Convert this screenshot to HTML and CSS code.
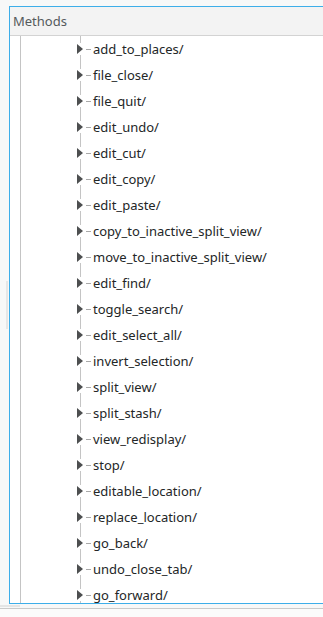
FILE: index.html
```html
<!DOCTYPE html>
<html lang="en">
<head>
  <meta charset="UTF-8" />
  <meta name="viewport" content="width=device-width, initial-scale=1.0" />
  <title>Methods</title>
  <link rel="stylesheet" href="styles.css">
</head>
<body>
  <div class="pane">
    <div class="grip"></div>
    <div class="view">
      <div class="head">Methods</div>
      <ul class="tree">
        <li><span class="arrow"></span><span class="dash"></span>add_to_places/</li>
        <li><span class="arrow"></span><span class="dash"></span>file_close/</li>
        <li><span class="arrow"></span><span class="dash"></span>file_quit/</li>
        <li><span class="arrow"></span><span class="dash"></span>edit_undo/</li>
        <li><span class="arrow"></span><span class="dash"></span>edit_cut/</li>
        <li><span class="arrow"></span><span class="dash"></span>edit_copy/</li>
        <li><span class="arrow"></span><span class="dash"></span>edit_paste/</li>
        <li><span class="arrow"></span><span class="dash"></span>copy_to_inactive_split_view/</li>
        <li><span class="arrow"></span><span class="dash"></span>move_to_inactive_split_view/</li>
        <li><span class="arrow"></span><span class="dash"></span>edit_find/</li>
        <li><span class="arrow"></span><span class="dash"></span>toggle_search/</li>
        <li><span class="arrow"></span><span class="dash"></span>edit_select_all/</li>
        <li><span class="arrow"></span><span class="dash"></span>invert_selection/</li>
        <li><span class="arrow"></span><span class="dash"></span>split_view/</li>
        <li><span class="arrow"></span><span class="dash"></span>split_stash/</li>
        <li><span class="arrow"></span><span class="dash"></span>view_redisplay/</li>
        <li><span class="arrow"></span><span class="dash"></span>stop/</li>
        <li><span class="arrow"></span><span class="dash"></span>editable_location/</li>
        <li><span class="arrow"></span><span class="dash"></span>replace_location/</li>
        <li><span class="arrow"></span><span class="dash"></span>go_back/</li>
        <li><span class="arrow"></span><span class="dash"></span>undo_close_tab/</li>
        <li><span class="arrow"></span><span class="dash"></span>go_forward/</li>
      </ul>
    </div>
  </div>
  <div class="status">
    <div class="hbar"></div>
    <div class="rule"></div>
  </div>
</body>
</html>
```

FILE: styles.css
```css
html, body {
  margin: 0;
  height: 100%;
  overflow: hidden;
}

body {
  background: #f7f8f8;
  font-family: 'Noto Sans', sans-serif;
  font-size: 13px;
}

.pane {
  display: flex;
  height: 598px;
  padding-top: 6px;
}

.grip {
  width: 2px;
  height: 48px;
  margin: 0 1px 0 6px;
  align-self: center;
  background: #e6e7e7;
}

.view {
  flex: 1;
  display: flex;
  flex-direction: column;
  min-width: 0;
  background: #ffffff;
  border: 1px solid #3daee9;
  border-right: none;
  overflow: hidden;
}

.head {
  height: 28px;
  line-height: 28px;
  padding-left: 3px;
  color: #555a5c;
  background: #f3f3f3;
  border-bottom: 1px solid #d3d3d3;
}

.tree {
  flex: 1;
  margin: 0;
  padding: 0 0 0 67px;
  list-style: none;
  overflow: hidden;
  color: #232627;
  background:
    linear-gradient(#c4c4c4, #c4c4c4) 10px 0 / 1px 100% no-repeat,
    linear-gradient(#c4c4c4, #c4c4c4) 70px 0 / 1px 100% no-repeat;
}

.tree li {
  display: flex;
  align-items: center;
  height: 26px;
  white-space: nowrap;
}

.arrow {
  display: flex;
  align-items: center;
  width: 8px;
  height: 12px;
  background: #ffffff;
}

.arrow::before {
  content: "";
  border-left: 6px solid #4d4f50;
  border-top: 5px solid transparent;
  border-bottom: 5px solid transparent;
}

.dash {
  width: 5px;
  margin: 1px 2px 0 1px;
  border-top: 1px dashed #a9a9a9;
}

.status {
  height: 13px;
  padding-top: 1px;
}

.hbar {
  width: 20px;
  height: 2px;
  background: #e4e5e5;
}

.rule {
  margin-top: 1px;
  border-top: 1px solid #c9caca;
  height: 12px;
  background: #fbfbfb;
}
```
